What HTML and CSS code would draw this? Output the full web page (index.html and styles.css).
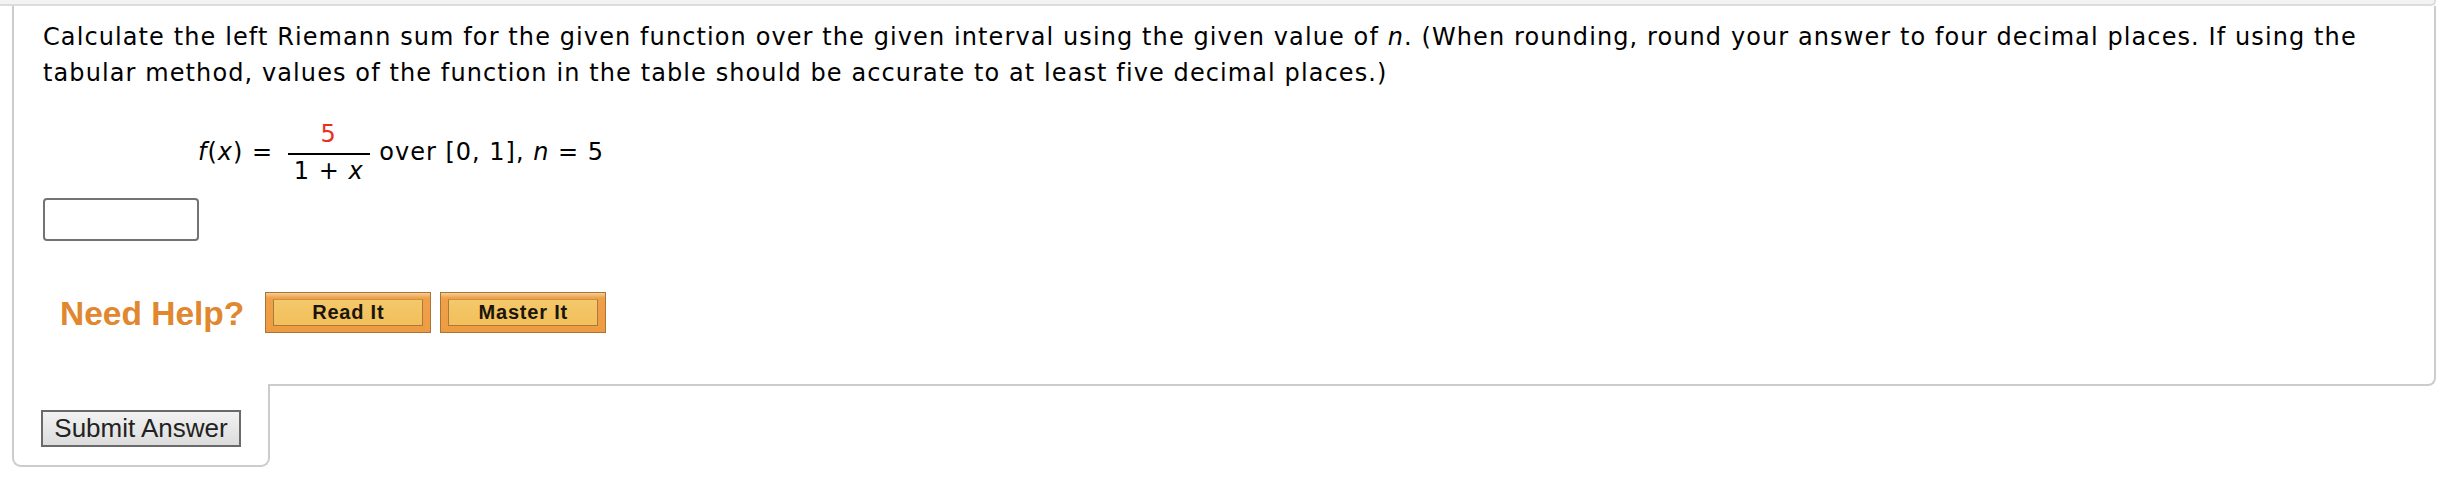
FILE: index.html
```html
<!DOCTYPE html>
<html lang="en">
<head>
<meta charset="utf-8">
<title>Left Riemann sum</title>
<link rel="stylesheet" href="styles.css">
</head>
<body>
<div class="page">
  <div class="prev-card"></div>
  <div class="card">
    <p class="question">Calculate the left Riemann sum for the given function over the given interval using the given value of <i>n</i>. (When rounding, round your answer to four decimal places. If using the tabular method, values of the function in the table should be accurate to at least five decimal places.)</p>
    <div class="formula"><i>f</i>(<i>x</i>) = <span class="frac"><span class="num">5</span><span class="den">1 + <i>x</i></span></span> over [0, 1], <i>n</i> = 5</div>
    <input class="answer" type="text" aria-label="answer">
    <div class="help-row">
      <span class="need-help">Need Help?</span>
      <button class="help-btn" type="button"><span class="help-inner">Read It</span></button>
      <button class="help-btn" type="button"><span class="help-inner">Master It</span></button>
    </div>
  </div>
  <div class="submit-tab">
    <button class="submit-btn" type="button">Submit Answer</button>
  </div>
</div>
</body>
</html>
```
FILE: styles.css
```css
html, body {
  margin: 0;
  padding: 0;
  background: #ffffff;
}

.page {
  padding: 0 8px 0 0;
  font-family: "DejaVu Sans", Verdana, sans-serif;
  color: #000;
}

.prev-card {
  height: 4px;
  background: #f3f3f3;
  border-bottom: 2px solid #dcdcdc;
  border-right: 2px solid #dcdcdc;
  border-bottom-right-radius: 5px;
}

.card {
  margin-left: 12px;
  border: 2px solid #cccccc;
  border-top: none;
  border-bottom-right-radius: 8px;
  padding: 13px 20px 50px 29px;
}

.question {
  margin: 0;
  font-size: 24px;
  line-height: 36px;
  letter-spacing: 1.1px;
}

.formula {
  margin: 31px 0 0 155px;
  font-size: 24px;
  line-height: 24px;
  letter-spacing: 1px;
  white-space: nowrap;
}

.frac {
  display: inline-flex;
  flex-direction: column;
  align-items: stretch;
  vertical-align: 18px;
  margin: 0 1px 0 6px;
  text-align: center;
}

.num {
  color: #e8301c;
  padding: 0 6px 7px;
  border-bottom: 2px solid #000;
}

.den {
  padding: 4px 6px 0;
}

.answer {
  display: block;
  box-sizing: border-box;
  width: 156px;
  height: 43px;
  margin: 15px 0 0 0;
  border: 2px solid #737373;
  border-radius: 4px;
  background: #fff;
  padding: 0 6px;
  font-size: 20px;
}

.help-row {
  display: flex;
  align-items: center;
  margin-top: 50px;
  padding-left: 17px;
  gap: 9px;
}

.need-help {
  font-family: "Liberation Sans", Arial, sans-serif;
  font-weight: bold;
  font-size: 33.5px;
  color: #e0872f;
  margin-right: 12px;
  line-height: 41px;
  padding-top: 2px;
}

.help-btn {
  box-sizing: border-box;
  width: 166px;
  height: 41px;
  padding: 6px 7px;
  margin: 0;
  border: 1px solid #a8743a;
  background: linear-gradient(#f7cf93 0, #efa04a 5px, #ee9c42 100%);
  cursor: pointer;
  display: flex;
}

.help-inner {
  flex: 1;
  display: flex;
  align-items: center;
  justify-content: center;
  border: 1px solid #a97a3c;
  border-top-color: #c79347;
  background: linear-gradient(#f5c86a, #f2bf5b);
  font-family: "Liberation Sans", Arial, sans-serif;
  font-weight: bold;
  font-size: 20px;
  letter-spacing: 0.8px;
  color: #1a160e;
}

.submit-tab {
  position: relative;
  box-sizing: border-box;
  margin: -2px 0 0 12px;
  width: 258px;
  border: 2px solid #cccccc;
  border-top: none;
  border-radius: 0 0 9px 9px;
  background: #fff;
  padding: 26px 0 18px 27px;
}

.submit-btn {
  box-sizing: border-box;
  width: 200px;
  height: 37px;
  margin: 0;
  padding: 0;
  border: 2px solid #6a6a6a;
  background: linear-gradient(#f2f2f2, #dcdcdc);
  font-family: "Liberation Sans", Arial, sans-serif;
  font-size: 26px;
  color: #222;
  display: block;
  cursor: pointer;
}
```
